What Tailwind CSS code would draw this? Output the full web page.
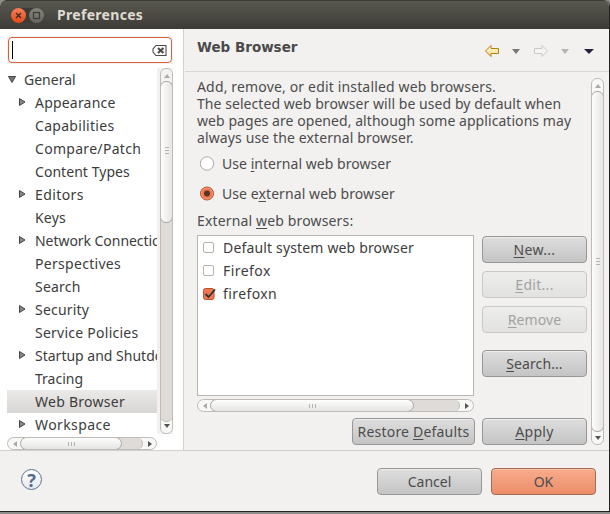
<!DOCTYPE html>
<html lang="en">
<head>
<meta charset="utf-8">
<title>Preferences</title>
<script src="https://cdn.jsdelivr.net/npm/@tailwindcss/browser@4"></script>
</head>
<body class="w-[610px] h-[514px] overflow-hidden bg-[#8f8d8b] font-['Noto_Sans',sans-serif] text-[14px] text-[#4c4c4c]">
<div class="w-[610px] h-[512px] flex flex-col bg-[#f2f1f0] border-r border-b border-[#242321] rounded-t-[6px] overflow-hidden">
  <header class="h-[29px] shrink-0 -mr-px flex items-center pl-[11px] bg-linear-to-b from-[#59584f] to-[#3c3b37] border-t border-[#3c3b37]">
    <div class="flex items-center gap-[3px] rounded-full bg-[#3c3b36]">
      <svg class="size-[15px]" viewBox="0 0 15 15"><defs><linearGradient id="close" x2="0" y2="1"><stop stop-color="#f8815a"/><stop offset="1" stop-color="#df4a16"/></linearGradient></defs><circle cx="7.5" cy="7.5" r="7.5" fill="url(#close)"/><path d="M5 5l5 5M10 5l-5 5" stroke="#3c2a20" stroke-width="1.3"/></svg>
      <svg class="size-[15px]" viewBox="0 0 15 15"><defs><linearGradient id="max" x2="0" y2="1"><stop stop-color="#85847c"/><stop offset="1" stop-color="#66655f"/></linearGradient></defs><circle cx="7.5" cy="7.5" r="7.5" fill="url(#max)"/><rect x="4.5" y="4.5" width="6" height="6" fill="none" stroke="#3c3b37" stroke-width="1.2"/></svg>
    </div>
    <h1 class="ml-[13px] font-bold text-[14px] leading-[18px] tracking-[0.3px] text-[#dfdbd2]">Preferences</h1>
  </header>

  <main class="h-[421px] shrink-0 flex">
    <aside class="w-[183px] bg-white pt-[7px] pl-[7px]">
      <div class="w-[166px] h-[28px] bg-[#f2f1f0] p-px">
        <div class="h-[26px] bg-white border-[1.5px] border-[#d9623a] rounded-[4px] flex items-center justify-between pl-[3px] pr-[4px]">
          <i class="w-px h-[18px] bg-black"></i>
          <svg class="w-[15px] h-[11px]" viewBox="0 0 15 11" fill="none"><path d="M4 .5h10v10H4L1 7V4z" stroke="#4c4c4c" stroke-width="1.1"/><path d="M6 3l5.500 5M11.500 3l-5.500 5" stroke="#4c4c4c" stroke-width="2.100"/></svg>
        </div>
      </div>
      <div class="flex mt-[4px]">
        <ul id="tree" class="w-[150px] h-[366px] overflow-hidden text-[#3c3c3c] whitespace-nowrap">
          <li class="h-[23px] flex items-center"><svg class="size-[10px] ml-0 mr-[7px]" viewBox="0 0 10 10"><path d="M1.500 1.500h7L5 7.500z" fill="#777" stroke="#444"/></svg><span>General</span></li>
          <li class="h-[23px] flex items-center pl-[11px]"><svg class="size-[10px] mr-[7px]" viewBox="0 0 10 10"><path d="M1.500 .5v7l5.500-3.500z" fill="#888" stroke="#444"/></svg><span class="tracking-[0.2px]">Appearance</span></li>
          <li class="h-[23px] flex items-center pl-[28px]"><span class="tracking-[0.3px]">Capabilities</span></li>
          <li class="h-[23px] flex items-center pl-[28px]"><span class="tracking-[0.3px]">Compare/Patch</span></li>
          <li class="h-[23px] flex items-center pl-[28px]"><span class="tracking-[0.05px]">Content Types</span></li>
          <li class="h-[23px] flex items-center pl-[11px]"><svg class="size-[10px] mr-[7px]" viewBox="0 0 10 10"><path d="M1.500 .5v7l5.500-3.500z" fill="#888" stroke="#444"/></svg><span class="tracking-[0.4px]">Editors</span></li>
          <li class="h-[23px] flex items-center pl-[28px]"><span class="tracking-[0.2px]">Keys</span></li>
          <li class="h-[23px] flex items-center pl-[11px]"><svg class="size-[10px] mr-[7px] shrink-0" viewBox="0 0 10 10"><path d="M1.500 .5v7l5.500-3.500z" fill="#888" stroke="#444"/></svg><span class="tracking-[-0.05px]">Network Connections</span></li>
          <li class="h-[23px] flex items-center pl-[28px]"><span class="tracking-[0.3px]">Perspectives</span></li>
          <li class="h-[23px] flex items-center pl-[28px]"><span class="tracking-[0.2px]">Search</span></li>
          <li class="h-[23px] flex items-center pl-[11px]"><svg class="size-[10px] mr-[7px]" viewBox="0 0 10 10"><path d="M1.500 .5v7l5.500-3.500z" fill="#888" stroke="#444"/></svg><span class="tracking-[0.2px]">Security</span></li>
          <li class="h-[23px] flex items-center pl-[28px]"><span class="tracking-[0.25px]">Service Policies</span></li>
          <li class="h-[23px] flex items-center pl-[11px]"><svg class="size-[10px] mr-[7px] shrink-0" viewBox="0 0 10 10"><path d="M1.500 .5v7l5.500-3.500z" fill="#888" stroke="#444"/></svg><span>Startup and Shutdown</span></li>
          <li class="h-[23px] flex items-center pl-[28px]"><span>Tracing</span></li>
          <li class="h-[23px] flex items-center pl-[28px] bg-linear-to-b from-[#ebeae9] to-[#d8d6d4]"><span class="tracking-[0.27px]">Web Browser</span></li>
          <li class="h-[23px] flex items-center pl-[11px]"><svg class="size-[10px] mr-[7px]" viewBox="0 0 10 10"><path d="M1.500 .5v7l5.500-3.500z" fill="#888" stroke="#444"/></svg><span class="tracking-[0.4px]">Workspace</span></li>
        </ul>
        <div class="w-[16px] h-[366px] bg-[#f2f1f0] pl-[3px]">
          <div class="w-[13px] h-full rounded-[6px] border border-[#bfbcb8] bg-[#dedbd8] flex flex-col overflow-hidden">
            <div class="h-[14px] bg-[#f3f2f1] flex justify-center items-center -mb-[2px]"><svg class="w-[6px] h-[4px]" viewBox="0 0 6 4"><path d="M0 4h6L3 0z" fill="#aaa"/></svg></div>
            <div class="h-[142px] -mx-px rounded-[6px] border border-[#aaa7a3] bg-linear-to-r from-[#fdfdfd] to-[#e6e5e3] flex flex-col gap-[2px] items-center justify-center pb-[3px]"><i class="w-[4px] h-px bg-[#b5b3b0]"></i><i class="w-[4px] h-px bg-[#b5b3b0]"></i><i class="w-[4px] h-px bg-[#b5b3b0]"></i></div>
            <div class="mt-auto h-[13px] bg-[#f8f8f7]"><div class="h-[5px] -mt-[3px] rounded-b-[5px] border-b border-[#c0bdba] bg-[#dedbd8]"></div><svg class="w-[6px] h-[4px] mx-auto mt-[2px]" viewBox="0 0 6 4"><path d="M0 0h6L3 4z" fill="#555"/></svg></div>
          </div>
        </div>
      </div>
      <div class="mt-[3px] w-[150px] h-[13px] rounded-full border border-[#bfbcb8] bg-[#f8f8f7] flex overflow-hidden">
        <div class="w-[13px] flex items-center justify-center -mr-px"><svg class="w-[4px] h-[6px]" viewBox="0 0 4 6"><path d="M4 0v6L0 3z" fill="#aaa"/></svg></div>
        <div class="relative w-[102px] -my-px rounded-full border border-[#aaa7a3] bg-linear-to-b from-[#fdfdfd] to-[#e6e5e3] flex gap-[2px] items-center justify-center"><i class="w-px h-[4px] bg-[#b5b3b0]"></i><i class="w-px h-[4px] bg-[#b5b3b0]"></i><i class="w-px h-[4px] bg-[#b5b3b0]"></i></div>
        <div class="flex-1 -ml-[7px] rounded-r-full border-r border-[#bfbcb8] bg-[#dedbd8]"></div>
        <div class="w-[13px] flex items-center justify-center"><svg class="w-[4px] h-[6px]" viewBox="0 0 4 6"><path d="M0 0v6L4 3z" fill="#555"/></svg></div>
      </div>
    </aside>

    <section class="flex-1 border-l border-[#d2d0ce] pl-px">
      <div class="h-[43px] border-b border-[#d8d6d4] flex items-start justify-between pl-[12px] pr-[15px]">
        <h2 class="mt-[9px] leading-[18px] font-bold font-['DejaVu_Sans',sans-serif] text-[13.5px] text-[#4a4a4a]">Web Browser</h2>
        <div class="mt-[14px] h-[16px] flex items-center">
          <svg class="w-[16px] h-[14px]" viewBox="0 0 16 14"><defs><linearGradient id="back" x2="0" y2="1"><stop stop-color="#fffbe0"/><stop offset="1" stop-color="#f8dc84"/></linearGradient></defs><path d="M1.500 7L7 1.500v3h7.500v5H7v3z" fill="url(#back)" stroke="#b57d12" stroke-linejoin="round"/></svg>
          <svg class="w-[8px] h-[5px] ml-[12px]" viewBox="0 0 8 5"><path d="M0 0h8L4 5z" fill="#777"/></svg>
          <svg class="w-[16px] h-[14px] ml-[13px]" viewBox="0 0 16 14"><path d="M14.500 7L9 1.500v3H1.500v5H9v3z" fill="#f4f4f3" stroke="#ccc9c7" stroke-linejoin="round"/></svg>
          <svg class="w-[8px] h-[5px] ml-[12px]" viewBox="0 0 8 5"><path d="M0 0h8L4 5z" fill="#b4b3b2"/></svg>
          <svg class="w-[10px] h-[5px] ml-[15px]" viewBox="0 0 10 5"><path d="M0 0h10L5 5z" fill="#25213f"/></svg>
        </div>
      </div>

      <div class="flex pl-[12px] pt-[6px]">
        <div class="w-[390px] h-[368px] flex flex-col">
          <p class="h-[68px] leading-[17px] whitespace-nowrap"><span class="tracking-[0.16px]">Add, remove, or edit installed web browsers.</span><br><span class="tracking-[0.06px]">The selected web browser will be used by default when</span><br><span class="tracking-[0.06px]">web pages are opened, although some applications may</span><br><span class="tracking-[0.12px]">always use the external browser.</span></p>
          <div class="mt-[5px] h-[24px] flex items-center pl-[3px] gap-[7px]"><svg class="size-[15px]" viewBox="0 0 15 15"><circle cx="7" cy="7.500" r="6.700" fill="#fff" stroke="#aaa8a5"/></svg><span class="tracking-[0.04px]">Use <u class="underline-offset-2">i</u>nternal web browser</span></div>
          <div class="mt-[6px] h-[24px] flex items-center pl-[3px] gap-[7px]"><svg class="size-[15px]" viewBox="0 0 15 15"><circle cx="7" cy="7.500" r="6.500" fill="#ee7950" stroke="#ad4a29"/><circle cx="7" cy="7.500" r="5.500" fill="none" stroke="#f8a585" stroke-width=".8"/><circle cx="7" cy="7.500" r="3" fill="#5c3425"/></svg><span class="tracking-[0.08px]">Use e<u class="underline-offset-2">x</u>ternal web browser</span></div>
          <div class="mt-[6px] h-[20px] leading-[20px] mb-[4px]"><span class="tracking-[0.15px]">External <u class="underline-offset-2">w</u>eb browsers:</span></div>
          <div class="flex gap-[8px]">
            <div class="w-[277px]">
              <ul class="h-[161px] bg-white border border-[#b8b6b2] text-[#3c3c3c]">
                <li class="h-[23px] flex items-center pl-[5px]"><i class="size-[11px] rounded-[2px] border border-[#b5b3b0] mr-[9px]"></i><span class="tracking-[0.16px]">Default system web browser</span></li>
                <li class="h-[23px] flex items-center pl-[5px]"><i class="size-[11px] rounded-[2px] border border-[#b5b3b0] mr-[9px]"></i><span class="tracking-[0.45px]">Firefox</span></li>
                <li class="h-[23px] flex items-center pl-[5px]"><svg class="w-[13px] h-[12px] mr-[7px]" viewBox="0 0 13 12"><rect x=".5" y=".5" width="10.500" height="11" rx="2" fill="#ee7950" stroke="#b9512e"/><path d="M2.500 6l3 3 6.500-7.500" fill="none" stroke="#333" stroke-width="1.800"/></svg><span class="tracking-[0.4px]">firefoxn</span></li>
              </ul>
              <div class="mt-[3px] h-[13px] rounded-full border border-[#bfbcb8] bg-[#f8f8f7] flex overflow-hidden">
                <div class="w-[13px] flex items-center justify-center -mr-px"><svg class="w-[4px] h-[6px]" viewBox="0 0 4 6"><path d="M4 0v6L0 3z" fill="#aaa"/></svg></div>
                <div class="relative w-[204px] -my-px rounded-full border border-[#aaa7a3] bg-linear-to-b from-[#fdfdfd] to-[#e6e5e3] flex gap-[2px] items-center justify-center"><i class="w-px h-[4px] bg-[#b5b3b0]"></i><i class="w-px h-[4px] bg-[#b5b3b0]"></i><i class="w-px h-[4px] bg-[#b5b3b0]"></i></div>
                <div class="flex-1 -ml-[7px] rounded-r-full border-r border-[#bfbcb8] bg-[#dedbd8]"></div>
                <div class="w-[13px] flex items-center justify-center"><svg class="w-[4px] h-[6px]" viewBox="0 0 4 6"><path d="M0 0v6L4 3z" fill="#555"/></svg></div>
              </div>
            </div>
            <div class="flex flex-col">
              <button class="w-[105px] h-[27px] mt-[1px] rounded-[4px] border border-[#979797] bg-linear-to-b from-[#dedede] to-[#c4c4c4] shadow-[inset_0_1px_0_#ececec]"><span class="tracking-[0.3px]"><u class="underline-offset-2">N</u>ew...</span></button>
              <button class="w-[105px] h-[27px] mt-[8px] rounded-[4px] border border-[#c9c8c7] bg-linear-to-b from-[#ededec] to-[#e2e2e1] text-[#a3a2a1]"><span class="tracking-[0.3px]"><u class="underline-offset-2">E</u>dit...</span></button>
              <button class="w-[105px] h-[27px] mt-[8px] rounded-[4px] border border-[#c9c8c7] bg-linear-to-b from-[#ededec] to-[#e2e2e1] text-[#a3a2a1]"><span class="tracking-[0.1px]"><u class="underline-offset-2">R</u>emove</span></button>
              <button class="w-[105px] h-[27px] mt-[17px] rounded-[4px] border border-[#979797] bg-linear-to-b from-[#dedede] to-[#c4c4c4] shadow-[inset_0_1px_0_#ececec]"><span class="tracking-[0.1px]"><u class="underline-offset-2">S</u>earch...</span></button>
            </div>
          </div>
          <div class="flex justify-end gap-[7px] mt-[6px]">
            <button class="w-[123px] h-[27px] rounded-[4px] border border-[#979797] bg-linear-to-b from-[#dedede] to-[#c4c4c4] shadow-[inset_0_1px_0_#ececec] whitespace-nowrap"><span class="tracking-[0.2px]">Restore <u class="underline-offset-2">D</u>efaults</span></button>
            <button class="w-[105px] h-[27px] rounded-[4px] border border-[#979797] bg-linear-to-b from-[#dedede] to-[#c4c4c4] shadow-[inset_0_1px_0_#ececec]"><span class="tracking-[0.3px]"><u class="underline-offset-2">A</u>pply</span></button>
          </div>
        </div>
        <div class="ml-[4px] w-[13px] h-[367px] rounded-[6px] border border-[#bfbcb8] bg-[#f8f8f7] flex flex-col overflow-hidden">
          <div class="h-[14px] flex justify-center items-center -mb-[2px] shrink-0"><svg class="w-[6px] h-[4px]" viewBox="0 0 6 4"><path d="M0 4h6L3 0z" fill="#aaa"/></svg></div>
          <div class="h-[341px] shrink-0 -mx-px rounded-[6px] border border-[#aaa7a3] bg-linear-to-r from-[#fdfdfd] to-[#e6e5e3] flex flex-col gap-[2px] items-center justify-center"><i class="w-[4px] h-px bg-[#b5b3b0]"></i><i class="w-[4px] h-px bg-[#b5b3b0]"></i><i class="w-[4px] h-px bg-[#b5b3b0]"></i></div>
          <div class="flex-1 flex justify-center items-center"><svg class="w-[6px] h-[4px]" viewBox="0 0 6 4"><path d="M0 0h6L3 4z" fill="#555"/></svg></div>
        </div>
      </div>
    </section>
  </main>

  <footer class="flex-1 border-t border-[#d2d0ce] flex items-start pt-[17px] pl-[20px] pr-[13px]">
    <div class="size-[21px] mt-px ml-px rounded-full border border-[#5c7191] bg-linear-to-b from-white to-[#e4e8ee] flex items-center justify-center font-bold text-[18px] leading-none text-[#566c8f]"><span>?</span></div>
    <div class="ml-auto flex gap-[9px]">
      <button class="w-[105px] h-[27px] rounded-[4px] border border-[#979797] bg-linear-to-b from-[#dedede] to-[#c4c4c4] shadow-[inset_0_1px_0_#ececec]"><span>Cancel</span></button>
      <button class="w-[105px] h-[27px] rounded-[4px] border border-[#a56a56] bg-linear-to-b from-[#f8ab8d] to-[#ec8e68] shadow-[inset_0_1px_0_#fac0a8]"><span>OK</span></button>
    </div>
  </footer>
</div>
</body>
</html>
